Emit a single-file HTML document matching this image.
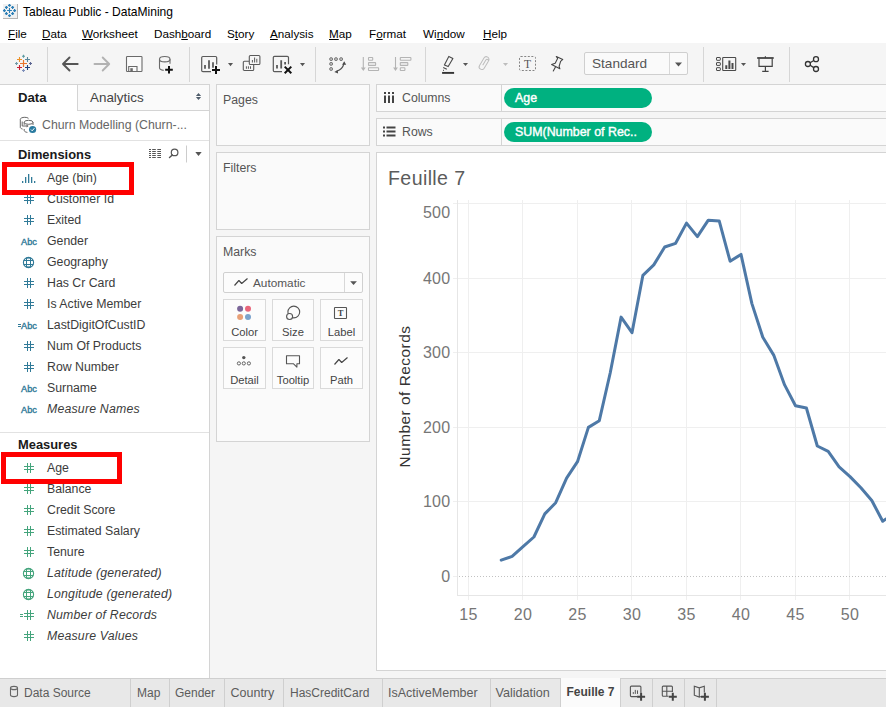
<!DOCTYPE html>
<html>
<head>
<meta charset="utf-8">
<title>Tableau Public - DataMining</title>
<style>
html,body{margin:0;padding:0;}
body{width:886px;height:707px;overflow:hidden;position:relative;background:#fff;font-family:"Liberation Sans",sans-serif;color:#333;}
.abs{position:absolute;}
.t{position:absolute;white-space:nowrap;line-height:1;}
#title{left:23px;top:6px;font-size:12.05px;color:#000;}
.menu{top:27.7px;font-size:11.7px;color:#000;}
.menu u{text-decoration:underline;text-underline-offset:1px;}
#toolbar{left:0;top:43px;width:886px;height:41px;background:#f5f5f5;}
.tsep{position:absolute;top:47px;width:1px;height:35px;background:#d6d6d6;}
#left{left:0;top:84px;width:209px;height:594px;background:#fff;border-top:1px solid #d4d4d4;box-sizing:border-box;}
#leftborder{left:209px;top:84px;width:1px;height:594px;background:#d4d4d4;}
#mid{left:210px;top:84px;width:676px;height:594px;background:#f5f5f5;}
.card{position:absolute;background:#fafafa;border:1px solid #d4d4d4;box-sizing:border-box;}
.ctitle{font-size:12.3px;color:#555;}
.fld{font-size:12.3px;color:#3c3c3c;left:47px;}
.fld.i{font-style:italic;letter-spacing:0.2px;}
.hd{font-size:12.9px;font-weight:bold;color:#1a1a1a;left:18px;}
.red{position:absolute;border:5px solid #ff0000;box-sizing:border-box;}
.pill{position:absolute;background:#00b180;border-radius:10px;height:20px;color:#fff;font-size:12.4px;-webkit-text-stroke:0.4px #fff;box-sizing:border-box;padding:3.5px 0 0 11px;white-space:nowrap;line-height:13px;}
#tabs{left:0;top:678px;width:886px;height:29px;background:#e8e8e8;border-top:1px solid #cfcfcf;box-sizing:border-box;}
.tab{position:absolute;top:679px;height:28px;border-right:1px solid #cfcfcf;box-sizing:border-box;font-size:12px;color:#5c5c5c;line-height:28.5px;white-space:nowrap;}
.mbtn{position:absolute;width:43px;height:42px;border:1px solid #dadada;background:#fcfcfc;box-sizing:border-box;}
.mlbl{position:absolute;font-size:11.2px;color:#444;text-align:center;width:43px;line-height:1;}
.ax{font-size:16px;letter-spacing:0.3px;fill:#767676;font-family:"Liberation Sans",sans-serif;}
</style>
</head>
<body>
<!-- title bar -->
<svg class="abs" style="left:0;top:0" width="22" height="22" viewBox="0 0 22 22"><rect x="3" y="4" width="14" height="14" fill="#f1f1f1"/><path d="M17.5 4v15M3 18.5h15" stroke="#b4b4b4" stroke-width="1" fill="none"/><path d="M9.5 8.1v4.8M7.1 10.5h4.8" stroke="#2b7eb6" stroke-width="1.1" fill="none"/><path d="M9.5 3.95v2.9M8.05 5.4h2.9M9.5 14.15v2.9M8.05 15.6h2.9M4.4 9.05v2.9M2.95 10.5h2.9M14.6 9.05v2.9M13.15 10.5h2.9M6.4 6.0v2.9M4.95 7.45h2.9M12.6 6.0v2.9M11.15 7.45h2.9M6.4 12.1v2.9M4.95 13.55h2.9M12.6 12.1v2.9M11.15 13.55h2.9" stroke="#2b7eb6" stroke-width="1.25" fill="none"/></svg>
<div class="t" id="title">Tableau Public - DataMining</div>
<!-- menu -->
<div class="t menu" style="left:8px"><u>F</u>ile</div>
<div class="t menu" style="left:42px"><u>D</u>ata</div>
<div class="t menu" style="left:82px"><u>W</u>orksheet</div>
<div class="t menu" style="left:154px">Dash<u>b</u>oard</div>
<div class="t menu" style="left:227px">S<u>t</u>ory</div>
<div class="t menu" style="left:270px"><u>A</u>nalysis</div>
<div class="t menu" style="left:329px"><u>M</u>ap</div>
<div class="t menu" style="left:369px">F<u>o</u>rmat</div>
<div class="t menu" style="left:423px">Wi<u>n</u>dow</div>
<div class="t menu" style="left:483px"><u>H</u>elp</div>
<!-- toolbar -->
<div class="abs" id="toolbar"></div>
<div class="tsep" style="left:47px"></div>
<div class="tsep" style="left:189px"></div>
<div class="tsep" style="left:315px"></div>
<div class="tsep" style="left:425px"></div>
<div class="tsep" style="left:703px"></div>
<div class="tsep" style="left:789px"></div>
<svg class="abs" style="left:0;top:43px" width="886" height="41" viewBox="0 43 886 41">
<!-- tableau logo -->
<g fill="none" stroke-width="1.1">
<path d="M23.5 60v7M20 63.5h7" stroke="#e8762d" stroke-width="1.2"/>
<path d="M19.5 57v5M17 59.5h5" stroke="#eb9129"/>
<path d="M27.5 57v5M25 59.5h5" stroke="#59879b"/>
<path d="M19.5 65v5M17 67.5h5" stroke="#c72035"/>
<path d="M27.5 65v5M25 67.5h5" stroke="#1f447e"/>
<path d="M23.5 54.8v3M22 56.3h3" stroke="#5b9aa1"/>
<path d="M16.5 62v3M15 63.5h3" stroke="#7099a6"/>
<path d="M30.5 62v3M29 63.5h3" stroke="#5c6692"/>
<path d="M23.5 69v3M22 70.5h3" stroke="#7e8fba"/>
</g>
<!-- back / forward -->
<path d="M77.7 64H63M69.5 57.5L63 64l6.5 6.5" fill="none" stroke="#555" stroke-width="1.9" stroke-linecap="round" stroke-linejoin="round"/>
<path d="M94.5 64H109M102.7 57.5L109.2 64l-6.5 6.5" fill="none" stroke="#b2b2b2" stroke-width="1.9" stroke-linecap="round" stroke-linejoin="round"/>
<!-- save -->
<rect x="126.5" y="56.5" width="15.5" height="15" rx="0.8" fill="#fafafa" stroke="#6a6a6a" stroke-width="1.1"/>
<path d="M128.7 71.5V66.5H137V71.5" fill="none" stroke="#6a6a6a" stroke-width="1.1"/>
<rect x="130.3" y="68.2" width="2.5" height="3.2" fill="#6a6a6a"/>
<!-- datasource + -->
<path d="M159.5 59.2v8.6c0 1.3 1.8 2.3 4.2 2.6M170 59.2v4.5" fill="none" stroke="#6a6a6a" stroke-width="1.1"/>
<ellipse cx="164.75" cy="59.2" rx="5.25" ry="2.7" fill="none" stroke="#6a6a6a" stroke-width="1.1"/>
<path d="M169 66v7.6M165.2 69.8h7.6" stroke="#111" stroke-width="2" fill="none"/>
<!-- new worksheet -->
<path d="M216.7 64.6V57.7a1.2 1.2 0 0 0-1.2-1.2H202.9a1.2 1.2 0 0 0-1.2 1.2V70.4a1.2 1.2 0 0 0 1.2 1.2H211" fill="none" stroke="#5a5a5a" stroke-width="1.2"/>
<path d="M205 65v3.7M209 60.2v8.5M213 62.2v5.5" stroke="#5a5a5a" stroke-width="1.8" fill="none"/>
<path d="M216 66v8M212 70h8" stroke="#111" stroke-width="2" fill="none"/>
<path d="M228 63h5l-2.5 3.2z" fill="#555"/>
<!-- duplicate -->
<path d="M249.3 61.3H244.4a1.1 1.1 0 0 0-1.1 1.1V69.4a1.1 1.1 0 0 0 1.1 1.1H252.6a1.1 1.1 0 0 0 1.1-1.1V64.5" fill="none" stroke="#5a5a5a" stroke-width="1.1"/>
<rect x="249.3" y="55.5" width="10.6" height="9" rx="1.1" fill="#f5f5f5" stroke="#5a5a5a" stroke-width="1.1"/>
<path d="M252.4 60v2.5M254.6 57.5v5M256.8 58.8v3.7M246.4 66.3v2.5M248.4 66.3v2.5M250.5 66.3v2.5" stroke="#5a5a5a" stroke-width="1" fill="none"/>
<!-- clear sheet -->
<path d="M288.5 64.2V57.5a1.2 1.2 0 0 0-1.2-1.2H274.5a1.2 1.2 0 0 0-1.2 1.2V70.4a1.2 1.2 0 0 0 1.2 1.2H282" fill="none" stroke="#5a5a5a" stroke-width="1.2"/>
<path d="M277 65v3.5M281.2 60.2v8.3M285.1 62.1v2.5" stroke="#5a5a5a" stroke-width="1.8" fill="none"/>
<path d="M284.7 66.6l6.6 6.6M291.3 66.6l-6.6 6.6" stroke="#111" stroke-width="2" fill="none"/>
<path d="M300 63h5l-2.5 3.2z" fill="#555"/>
<!-- swap -->
<g fill="none" stroke="#505050" stroke-width="0.9"><rect x="329.9" y="57.9" width="2.4" height="2.4" rx="0.3"/><rect x="334.8" y="57.9" width="2.4" height="2.4" rx="0.3"/><rect x="339.9" y="57.9" width="2.4" height="2.4" rx="0.3"/><rect x="329.9" y="62.7" width="2.4" height="2.4" rx="0.3"/><rect x="329.9" y="67.8" width="2.4" height="2.4" rx="0.3"/>
<path d="M343.9 63.6c-0.9 3.9-3.3 6.4-7.2 7.6" stroke-width="1.2"/></g>
<path d="M344.2 61.3l2 3.4-4.1 0.1zM334.3 72.1l3.4-2.1 0.4 3.6z" fill="#4a4a4a"/>
<!-- sort asc / desc (disabled) -->
<g fill="none" stroke="#b4b4b4" stroke-width="1.1">
<path d="M363.3 57v12"/><rect x="368.5" y="57.5" width="4.2" height="2.8" rx="0.5"/><rect x="368.5" y="62.6" width="7.1" height="2.8" rx="0.5"/><rect x="368.5" y="67.7" width="10.1" height="2.8" rx="0.5"/>
<path d="M395.5 57v12"/><rect x="400.3" y="57.5" width="10.6" height="2.8" rx="0.5"/><rect x="400.3" y="62.6" width="7.5" height="2.8" rx="0.5"/><rect x="400.3" y="67.7" width="4.6" height="2.8" rx="0.5"/>
</g>
<path d="M360.9 67.5h4.8l-2.4 3.4zM393.1 67.5h4.8l-2.4 3.4z" fill="#b4b4b4"/>
<!-- highlighter -->
<path d="M442.1 72.9h12" stroke="#333" stroke-width="1.9"/>
<path d="M448.8 56.4l4.1 2-4.7 8.2-3.8-1.7zM443.2 67.6l3.6 1.7" fill="none" stroke="#4a4a4a" stroke-width="1.1" stroke-linejoin="round"/>
<rect x="443" y="69.8" width="1" height="1" fill="#4a4a4a"/>
<path d="M463 62.9h5l-2.5 3.1z" fill="#555"/>
<!-- paperclip disabled -->
<g transform="translate(485.2 63.8) rotate(31)" fill="none" stroke="#bdbdbd" stroke-width="1"><path d="M-1.4 2.5V-3.6a1.4 1.4 0 0 1 2.8 0V4.3a2.7 2.7 0 0 1-5.4 0V-4.3a2.7 2.7 0 0 1 5.4 0"/></g>
<path d="M503 62.9h5l-2.5 3.1z" fill="#bdbdbd"/>
<!-- text box -->
<rect x="519.5" y="56.5" width="16" height="14" rx="1.2" fill="none" stroke="#858585" stroke-width="1" stroke-dasharray="2 1.55"/>
<text x="527.5" y="67.9" text-anchor="middle" style="font-family:'Liberation Serif',serif;font-size:11.5px;fill:#555">T</text>
<!-- pin -->
<path d="M556.3 56.5l6.5 2.9-2.2 2-1.5 5 0.8 2.4-8.3-4.3 3.6-1.3 2.4-4.8zM555.6 66.7l-2.3 4.2" fill="none" stroke="#444" stroke-width="1.1" stroke-linejoin="round" stroke-linecap="round"/>
<!-- fit dropdown -->
<rect x="584.5" y="52.5" width="103" height="22" rx="1.5" fill="#fafafa" stroke="#cfcfcf"/>
<path d="M669.5 53v21" stroke="#d8d8d8"/>
<path d="M675 62.4h7l-3.5 4z" fill="#555"/>
<text x="592" y="68.2" style="font-family:'Liberation Sans',sans-serif;font-size:13.6px;fill:#555">Standard</text>
<!-- show me -->
<g fill="none" stroke="#4a4a4a" stroke-width="1"><rect x="716.5" y="57.5" width="3.8" height="2.8" rx="0.4"/><rect x="716.5" y="62.6" width="3.8" height="2.8" rx="0.4"/><rect x="716.5" y="67.7" width="3.8" height="2.8" rx="0.4"/><rect x="722.7" y="57.5" width="13" height="13" rx="0.6" stroke-width="1.1"/></g>
<path d="M726.3 65.2v3.8M729.4 60.6v8.4M732.5 62.9v6.1" stroke="#4a4a4a" stroke-width="2" fill="none"/>
<path d="M741 62.9h5l-2.5 3z" fill="#555"/>
<!-- presentation -->
<path d="M757.2 58h16.5" stroke="#444" stroke-width="1.8"/>
<path d="M765.4 56.3v1.7M759 58.5v7.8h13.2V58.5M765.4 66.3v5M762.2 71.4h6.4" fill="none" stroke="#444" stroke-width="1.2"/>
<!-- share -->
<g fill="none" stroke="#333" stroke-width="1.3"><circle cx="807.9" cy="64" r="2.5"/><circle cx="816" cy="59.2" r="2.5"/><circle cx="816" cy="69" r="2.5"/><path d="M810.1 62.7l3.7-2.2M810.1 65.3l3.7 2.3"/></g>
</svg>
<!-- data pane -->
<div class="abs" id="left"></div>
<div class="abs" id="leftborder"></div>
<div class="abs" style="left:77px;top:85px;width:132px;height:26px;background:#fafafa;border-left:1px solid #d4d4d4;border-bottom:1px solid #d4d4d4;box-sizing:border-box"></div>
<div class="t" style="left:18px;top:91px;font-size:13.2px;font-weight:bold;color:#1a1a1a">Data</div>
<div class="t" style="left:90px;top:91px;font-size:13.4px;color:#444">Analytics</div>
<svg class="abs" style="left:195px;top:92px" width="8" height="9" viewBox="195 92 8 9"><path d="M198.5 93L201.1 96H195.9zM198.5 100L201.1 97H195.9z" fill="#4f5d6b"/></svg>
<svg class="abs" style="left:18px;top:115px" width="20" height="20" viewBox="18 115 20 20"><g fill="none" stroke="#666" stroke-width="1">
<path d="M28.5 118.3c-1-0.7-2.3-1-3.7-1-2.5 0-4.5 0.9-4.5 2v8c0 0.8 0.9 1.4 2.3 1.8"/>
<path d="M22.2 121.5v4.5h5.2"/>
<ellipse cx="28.6" cy="122.3" rx="4.4" ry="2"/>
<path d="M24.2 122.3v2.5M33 122.3v2.7M24.2 129v1.5c0 0.9 1.4 1.7 3.2 1.9"/>
</g>
<path d="M26.6 124.4l2 1.6-2 1.6z" fill="#666"/>
<circle cx="32.6" cy="129.5" r="3.6" fill="#2a7ba0"/>
<path d="M30.9 129.5l1.3 1.3 2.2-2.6" fill="none" stroke="#fff" stroke-width="1"/>
</svg>
<div class="t" style="left:42px;top:119px;font-size:12.3px;color:#666">Churn Modelling (Churn-...</div>
<div class="abs" style="left:0;top:140px;width:209px;height:1px;background:#e2e2e2"></div>
<div class="t hd" style="top:149px">Dimensions</div>
<svg class="abs" style="left:146px;top:144px" width="60" height="20" viewBox="146 144 60 20">
<path d="M149 149.5h2M152.2 149.5h3.6M157.3 149.5h3.7M149 151.5h2M152.2 151.5h3.6M157.3 151.5h3.7M149 153.5h2M152.2 153.5h3.6M157.3 153.5h3.7M149 155.5h2M152.2 155.5h3.6M157.3 155.5h3.7M149 157.5h2M152.2 157.5h3.6M157.3 157.5h3.7" stroke="#555" stroke-width="1" fill="none"/>
<circle cx="174.6" cy="152.4" r="3.3" fill="none" stroke="#555" stroke-width="1.2"/>
<path d="M172.3 154.9l-2.8 2.7" stroke="#555" stroke-width="1.4" stroke-linecap="round"/>
<path d="M186.5 145.5v17" stroke="#ccc" stroke-width="1"/>
<path d="M195.3 152h6.4l-3.2 4z" fill="#555"/>
</svg>
<svg class="abs" style="left:21px;top:173px" width="16" height="10" viewBox="0 0 16 10"><g fill="#307a98"><rect x="1" y="8" width="1.3" height="2"/><rect x="4" y="4" width="1.3" height="6"/><rect x="7" y="1" width="1.3" height="9"/><rect x="10" y="4" width="1.3" height="6"/><rect x="13" y="8" width="1.3" height="2"/></g></svg><div class="t fld" style="top:171.5px">Age (bin)</div>
<svg class="abs" style="left:19px;top:194px" width="15" height="10" viewBox="-5 0 15 10"><g stroke="#307a98" stroke-width="1" fill="none"><path d="M3.5 0v10M6.5 0v10M0 3.5h10M0 6.5h10"/></g></svg><div class="t fld" style="top:192.5px">Customer Id</div>
<svg class="abs" style="left:19px;top:215px" width="15" height="10" viewBox="-5 0 15 10"><g stroke="#307a98" stroke-width="1" fill="none"><path d="M3.5 0v10M6.5 0v10M0 3.5h10M0 6.5h10"/></g></svg><div class="t fld" style="top:213.5px">Exited</div>
<div class="t" style="left:21px;top:237.1px;font-size:9.8px;color:#307a98;-webkit-text-stroke:0.4px #307a98;transform:scaleX(0.94);transform-origin:0 0">Abc</div><div class="t fld" style="top:234.5px">Gender</div>
<svg class="abs" style="left:22px;top:256px" width="13" height="13" viewBox="-6.5 -6.5 13 13"><g stroke="#307a98" stroke-width="1" fill="none"><circle cx="0" cy="0" r="5.1" stroke-width="1.1"/><path d="M-2 -4.7v9.4M2 -4.7v9.4M-4.7 -2h9.4M-4.7 2h9.4"/><path d="M-2 -4.6c1.3 1 2.7 1 4 0M-2 4.6c1.3 -1 2.7 -1 4 0" stroke-width="0.8"/></g></svg><div class="t fld" style="top:255.5px">Geography</div>
<svg class="abs" style="left:19px;top:278px" width="15" height="10" viewBox="-5 0 15 10"><g stroke="#307a98" stroke-width="1" fill="none"><path d="M3.5 0v10M6.5 0v10M0 3.5h10M0 6.5h10"/></g></svg><div class="t fld" style="top:276.5px">Has Cr Card</div>
<svg class="abs" style="left:19px;top:299px" width="15" height="10" viewBox="-5 0 15 10"><g stroke="#307a98" stroke-width="1" fill="none"><path d="M3.5 0v10M6.5 0v10M0 3.5h10M0 6.5h10"/></g></svg><div class="t fld" style="top:297.5px">Is Active Member</div>
<div class="t" style="left:21px;top:321.1px;font-size:9.8px;color:#307a98;-webkit-text-stroke:0.4px #307a98;transform:scaleX(0.94);transform-origin:0 0">Abc</div><svg class="abs" style="left:18px;top:323px" width="4" height="5"><path d="M0 1.5h3M0 3.5h3" stroke="#307a98" stroke-width="1"/></svg><div class="t fld" style="top:318.5px">LastDigitOfCustID</div>
<svg class="abs" style="left:19px;top:341px" width="15" height="10" viewBox="-5 0 15 10"><g stroke="#307a98" stroke-width="1" fill="none"><path d="M3.5 0v10M6.5 0v10M0 3.5h10M0 6.5h10"/></g></svg><div class="t fld" style="top:339.5px">Num Of Products</div>
<svg class="abs" style="left:19px;top:362px" width="15" height="10" viewBox="-5 0 15 10"><g stroke="#307a98" stroke-width="1" fill="none"><path d="M3.5 0v10M6.5 0v10M0 3.5h10M0 6.5h10"/></g></svg><div class="t fld" style="top:360.5px">Row Number</div>
<div class="t" style="left:21px;top:384.1px;font-size:9.8px;color:#307a98;-webkit-text-stroke:0.4px #307a98;transform:scaleX(0.94);transform-origin:0 0">Abc</div><div class="t fld" style="top:381.5px">Surname</div>
<div class="t" style="left:21px;top:405.1px;font-size:9.8px;color:#307a98;-webkit-text-stroke:0.4px #307a98;transform:scaleX(0.94);transform-origin:0 0">Abc</div><div class="t fld i" style="top:402.5px">Measure Names</div>
<div class="abs" style="left:0;top:432px;width:209px;height:1px;background:#e2e2e2"></div>
<div class="t hd" style="top:439px">Measures</div>
<svg class="abs" style="left:19px;top:463px" width="15" height="10" viewBox="-5 0 15 10"><g stroke="#44a47c" stroke-width="1" fill="none"><path d="M3.5 0v10M6.5 0v10M0 3.5h10M0 6.5h10"/></g></svg><div class="t fld" style="top:461.5px">Age</div>
<svg class="abs" style="left:19px;top:484px" width="15" height="10" viewBox="-5 0 15 10"><g stroke="#44a47c" stroke-width="1" fill="none"><path d="M3.5 0v10M6.5 0v10M0 3.5h10M0 6.5h10"/></g></svg><div class="t fld" style="top:482.5px">Balance</div>
<svg class="abs" style="left:19px;top:505px" width="15" height="10" viewBox="-5 0 15 10"><g stroke="#44a47c" stroke-width="1" fill="none"><path d="M3.5 0v10M6.5 0v10M0 3.5h10M0 6.5h10"/></g></svg><div class="t fld" style="top:503.5px">Credit Score</div>
<svg class="abs" style="left:19px;top:526px" width="15" height="10" viewBox="-5 0 15 10"><g stroke="#44a47c" stroke-width="1" fill="none"><path d="M3.5 0v10M6.5 0v10M0 3.5h10M0 6.5h10"/></g></svg><div class="t fld" style="top:524.5px">Estimated Salary</div>
<svg class="abs" style="left:19px;top:547px" width="15" height="10" viewBox="-5 0 15 10"><g stroke="#44a47c" stroke-width="1" fill="none"><path d="M3.5 0v10M6.5 0v10M0 3.5h10M0 6.5h10"/></g></svg><div class="t fld" style="top:545.5px">Tenure</div>
<svg class="abs" style="left:22px;top:567px" width="13" height="13" viewBox="-6.5 -6.5 13 13"><g stroke="#44a47c" stroke-width="1" fill="none"><circle cx="0" cy="0" r="5.1" stroke-width="1.1"/><path d="M-2 -4.7v9.4M2 -4.7v9.4M-4.7 -2h9.4M-4.7 2h9.4"/><path d="M-2 -4.6c1.3 1 2.7 1 4 0M-2 4.6c1.3 -1 2.7 -1 4 0" stroke-width="0.8"/></g></svg><div class="t fld i" style="top:566.5px">Latitude (generated)</div>
<svg class="abs" style="left:22px;top:588px" width="13" height="13" viewBox="-6.5 -6.5 13 13"><g stroke="#44a47c" stroke-width="1" fill="none"><circle cx="0" cy="0" r="5.1" stroke-width="1.1"/><path d="M-2 -4.7v9.4M2 -4.7v9.4M-4.7 -2h9.4M-4.7 2h9.4"/><path d="M-2 -4.6c1.3 1 2.7 1 4 0M-2 4.6c1.3 -1 2.7 -1 4 0" stroke-width="0.8"/></g></svg><div class="t fld i" style="top:587.5px">Longitude (generated)</div>
<svg class="abs" style="left:19px;top:610px" width="15" height="10" viewBox="-5 0 15 10"><g stroke="#44a47c" stroke-width="1" fill="none"><path d="M3.5 0v10M6.5 0v10M0 3.5h10M0 6.5h10"/><path d="M-4 4.5h3M-4 6.5h3"/></g></svg><div class="t fld i" style="top:608.5px">Number of Records</div>
<svg class="abs" style="left:19px;top:631px" width="15" height="10" viewBox="-5 0 15 10"><g stroke="#44a47c" stroke-width="1" fill="none"><path d="M3.5 0v10M6.5 0v10M0 3.5h10M0 6.5h10"/></g></svg><div class="t fld i" style="top:629.5px">Measure Values</div>
<div class="red" style="left:2px;top:162px;width:132px;height:33px"></div>
<div class="red" style="left:1px;top:452px;width:121px;height:32px"></div>
<!-- cards & shelves -->
<div class="abs" id="mid"></div>
<div class="card" style="left:216px;top:84px;width:154px;height:62px"></div><div class="t ctitle" style="left:223px;top:94px">Pages</div>
<div class="card" style="left:216px;top:152px;width:154px;height:78px"></div><div class="t ctitle" style="left:223px;top:162px">Filters</div>
<div class="card" style="left:216px;top:236px;width:154px;height:206px"></div><div class="t ctitle" style="left:223px;top:246px">Marks</div>
<div class="abs" style="left:223px;top:272px;width:140px;height:21px;border:1px solid #d0d0d0;border-radius:2px;background:#fcfcfc;box-sizing:border-box"></div>
<div class="abs" style="left:344px;top:273px;width:1px;height:19px;background:#d8d8d8"></div>
<svg class="abs" style="left:233px;top:276px" width="16" height="12" viewBox="233 276 16 12"><path d="M234.5 285.5l4.4-5 2.8 3 5.8-5" fill="none" stroke="#444" stroke-width="1.15" stroke-linejoin="round"/></svg>
<div class="t" style="left:253px;top:277.5px;font-size:11.8px;color:#555">Automatic</div>
<svg class="abs" style="left:349px;top:280px" width="9" height="6"><path d="M1.2 1.3h6.7l-3.35 3.6z" fill="#555"/></svg>
<div class="mbtn" style="left:223px;top:299px"></div>
<div class="mbtn" style="left:272px;top:299px;width:42px"></div>
<div class="mbtn" style="left:320px;top:299px"></div>
<div class="mbtn" style="left:223px;top:347px"></div>
<div class="mbtn" style="left:272px;top:347px;width:42px"></div>
<div class="mbtn" style="left:320px;top:347px"></div>
<svg class="abs" style="left:223px;top:299px" width="140" height="90" viewBox="223 299 140 90">
<circle cx="240.1" cy="308.8" r="3" fill="#7b6699"/><circle cx="248" cy="308.8" r="3" fill="#e8657a"/><circle cx="240.1" cy="317.1" r="3" fill="#e8a077"/><circle cx="248" cy="317.1" r="3" fill="#7ba3cc"/>
<circle cx="293.8" cy="312" r="5.9" fill="none" stroke="#555" stroke-width="1.1"/><circle cx="289.6" cy="316.5" r="3" fill="#fcfcfc" stroke="#555" stroke-width="1.1"/>
<rect x="334.5" y="307.5" width="12" height="11" rx="0.6" fill="none" stroke="#555" stroke-width="1.1"/>
<text x="340.5" y="316.3" text-anchor="middle" style="font-family:'Liberation Serif',serif;font-size:8.5px;font-weight:bold;fill:#444">T</text>
<circle cx="243.8" cy="357.6" r="1.7" fill="#555"/><g fill="none" stroke="#555" stroke-width="0.9"><circle cx="238.9" cy="363.4" r="1.6"/><circle cx="243.8" cy="363.4" r="1.6"/><circle cx="248.9" cy="363.4" r="1.6"/></g>
<path d="M286.5 355.7h13v8h-2.6l0 3.4-3.6-3.4h-6.8z" fill="none" stroke="#555" stroke-width="1.1" stroke-linejoin="round"/>
<path d="M334.5 364.5l4.4-5 2.8 3 5.8-5" fill="none" stroke="#444" stroke-width="1.15" stroke-linejoin="round"/>
</svg>
<div class="mlbl" style="left:223px;top:327.3px">Color</div>
<div class="mlbl" style="left:272px;top:327.3px;width:42px">Size</div>
<div class="mlbl" style="left:320px;top:327.3px">Label</div>
<div class="mlbl" style="left:223px;top:375.3px">Detail</div>
<div class="mlbl" style="left:272px;top:375.3px;width:42px">Tooltip</div>
<div class="mlbl" style="left:320px;top:375.3px">Path</div>
<div class="card" style="left:376px;top:84px;width:520px;height:28px"></div>
<div class="card" style="left:376px;top:118px;width:520px;height:28px"></div>
<div class="abs" style="left:501px;top:85px;width:1px;height:26px;background:#d4d4d4"></div>
<div class="abs" style="left:501px;top:119px;width:1px;height:26px;background:#d4d4d4"></div>
<svg class="abs" style="left:384px;top:92px" width="11" height="11" viewBox="0 0 11 11"><g fill="#444"><rect x="0" y="0" width="2" height="2"/><rect x="4" y="0" width="2" height="2"/><rect x="8" y="0" width="2" height="2"/><rect x="0" y="3.5" width="2" height="7.5"/><rect x="4" y="3.5" width="2" height="7.5"/><rect x="8" y="3.5" width="2" height="7.5"/></g></svg>
<svg class="abs" style="left:383px;top:126px" width="13" height="11" viewBox="0 0 13 11"><g fill="#444"><rect x="0" y="0.5" width="2" height="2"/><rect x="0" y="4.5" width="2" height="2"/><rect x="0" y="8.5" width="2" height="2"/><rect x="3.5" y="0.5" width="9" height="2"/><rect x="3.5" y="4.5" width="9" height="2"/><rect x="3.5" y="8.5" width="9" height="2"/></g></svg>
<div class="t ctitle" style="left:402px;top:92px">Columns</div>
<div class="t ctitle" style="left:402px;top:126px">Rows</div>
<div class="pill" style="left:504px;top:88px;width:148px">Age</div>
<div class="pill" style="left:504px;top:122px;width:148px">SUM(Number of Rec..</div>
<div class="abs" style="left:376px;top:152px;width:520px;height:519px;background:#fff;border:1px solid #d4d4d4;box-sizing:border-box"></div>
<div class="t" style="left:388px;top:169px;font-size:19.6px;letter-spacing:0.38px;color:#5c5c5c">Feuille 7</div>
<svg class="abs" style="left:0;top:0" width="886" height="707" viewBox="0 0 886 707">
<g stroke="#efefef" stroke-width="1" shape-rendering="crispEdges"><path d="M468.5 200V600"/><path d="M522.5 200V600"/><path d="M577.5 200V600"/><path d="M631.5 200V600"/><path d="M686.5 200V600"/><path d="M740.5 200V600"/><path d="M795.5 200V600"/><path d="M849.5 200V600"/><path d="M453 501.5H886"/><path d="M453 427.5H886"/><path d="M453 352.5H886"/><path d="M453 278.5H886"/><path d="M453 203.5H886"/><path d="M453 576.5H458"/></g>
<path d="M457.5 200V595.5H886" stroke="#e6e6e6" fill="none" shape-rendering="crispEdges"/>
<path d="M459 576.5H886" stroke="#c2c2c2" stroke-dasharray="1 2" fill="none" shape-rendering="crispEdges"/>
<polyline points="501.2,560.1 512.1,556.4 523.0,546.7 533.9,537.0 544.8,513.9 555.7,502.7 566.6,478.1 577.5,461.7 588.4,427.4 599.3,420.7 610.2,373.0 621.1,317.1 632.0,332.7 642.9,275.3 653.8,264.9 664.7,247.0 675.6,243.3 686.5,223.1 697.4,236.6 708.3,220.2 719.2,220.9 730.1,261.2 741.0,254.4 751.9,303.6 762.8,337.2 773.7,355.1 784.6,384.9 795.5,405.8 806.4,408.0 817.3,446.0 828.2,451.3 839.1,466.9 850.0,476.6 860.9,487.8 871.8,500.5 882.7,521.3 893.6,513.9" fill="none" stroke="#4e79a7" stroke-width="3" stroke-linejoin="round" stroke-linecap="round"/>
<text class="ax" x="450.5" y="581.9" text-anchor="end">0</text><text class="ax" x="450.5" y="507.3" text-anchor="end">100</text><text class="ax" x="450.5" y="432.8" text-anchor="end">200</text><text class="ax" x="450.5" y="358.2" text-anchor="end">300</text><text class="ax" x="450.5" y="283.7" text-anchor="end">400</text><text class="ax" x="450.5" y="217.8" text-anchor="end">500</text>
<text class="ax" x="468.5" y="620" text-anchor="middle">15</text><text class="ax" x="523.0" y="620" text-anchor="middle">20</text><text class="ax" x="577.5" y="620" text-anchor="middle">25</text><text class="ax" x="632.0" y="620" text-anchor="middle">30</text><text class="ax" x="686.5" y="620" text-anchor="middle">35</text><text class="ax" x="741.0" y="620" text-anchor="middle">40</text><text class="ax" x="795.5" y="620" text-anchor="middle">45</text><text class="ax" x="850.0" y="620" text-anchor="middle">50</text>
<text x="0" y="0" transform="translate(409.8,467.5) rotate(-90)" style="font-size:15.4px;letter-spacing:0.5px;fill:#333;font-family:'Liberation Sans',sans-serif">Number of Records</text>
</svg>
<!-- sheet tabs -->
<div class="abs" id="tabs"></div>
<svg class="abs" style="left:9px;top:685px" width="10" height="13" viewBox="0 0 10 13"><path d="M1.5 3v7c0 0.9 1.6 1.6 3.5 1.6s3.5-0.7 3.5-1.6V3" fill="none" stroke="#666" stroke-width="1.1"/><ellipse cx="5" cy="3" rx="3.5" ry="1.6" fill="none" stroke="#666" stroke-width="1.1"/></svg>
<div class="tab" style="left:0;width:131px;padding-left:24px">Data Source</div>
<div class="tab" style="left:131px;width:39px;padding-left:6px">Map</div>
<div class="tab" style="left:170px;width:55px;padding-left:5px">Gender</div>
<div class="tab" style="left:225px;width:59px;padding-left:5.5px;font-size:12.5px">Country</div>
<div class="tab" style="left:284px;width:99px;padding-left:6px">HasCreditCard</div>
<div class="tab" style="left:383px;width:108px;padding-left:5px;font-size:12.5px">IsActiveMember</div>
<div class="tab" style="left:491px;width:70px;padding-left:4.5px;font-size:12.6px">Validation</div>
<div class="tab" style="left:561px;top:678px;height:29px;width:60px;text-align:center;background:#fbfbfb;color:#444;font-weight:bold;font-size:12px;line-height:28px">Feuille 7</div>
<div class="tab" style="left:621px;width:32px"></div>
<div class="tab" style="left:653px;width:32px"></div>
<div class="tab" style="left:685px;width:32px"></div>
<svg class="abs" style="left:621px;top:679px" width="96" height="28" viewBox="621 679 96 28"><g fill="none" stroke="#555" stroke-width="1.1">
<path d="M640.9 692.7V687.1a1 1 0 0 0-1-1H631.4a1 1 0 0 0-1 1V695.6a1 1 0 0 0 1 1H637"/>
<path d="M633.3 692.1v1.8M635.3 689.9v4M637.5 690.4v3.5" stroke-width="1"/>
<path d="M672.4 692V687.1a1 1 0 0 0-1-1H663.3a1 1 0 0 0-1 1V695.3a1 1 0 0 0 1 1H668.5M666.8 686.1v10.2M662.3 691.3h10.1"/>
<path d="M704.3 692.5V686.2l-5 1.6-5-1.6v9l5 1.9 1.5-0.6M699.3 687.8v9"/>
</g>
<path d="M641.1 692.7v8M637.1 696.7h8M672.8 692.7v8M668.8 696.7h8M704.9 692.7v8M700.9 696.7h8" stroke="#444" stroke-width="2" fill="none"/>
</svg>
</body>
</html>
